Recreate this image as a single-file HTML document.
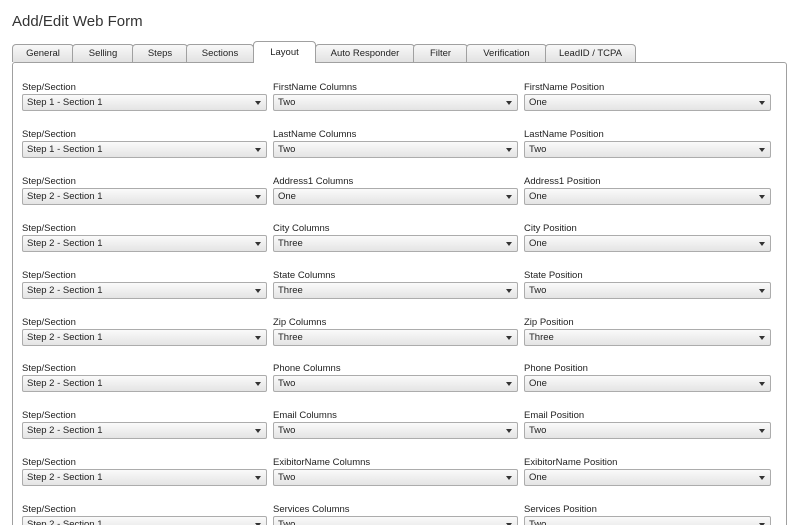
<!DOCTYPE html>
<html><head><style>
html,body{margin:0;width:800px;height:525px;overflow:hidden}
body{background:#fff;font-family:"Liberation Sans",sans-serif;color:#222;position:relative}
h1{position:absolute;left:12px;top:13px;margin:0;font-weight:normal;font-size:15px;color:#333}
.tab{position:absolute;top:44px;height:18px;border:1px solid #a0a0a0;border-bottom:none;border-radius:4px 4px 0 0;background:linear-gradient(#f8f8f8,#e2e2e2);font-size:9.5px;line-height:18px;text-align:center;box-sizing:border-box}
.tab.act{top:41px;height:22px;background:#fff;z-index:2;line-height:22px}
.panel{position:absolute;left:12px;top:62px;width:775px;height:520px;border:1px solid #a0a0a0;border-radius:3px;box-sizing:border-box}
.row{position:absolute;left:0;width:800px;height:30px}
.c{position:absolute;width:245px}
.l{font-size:9.5px;height:11px;line-height:11px}
.s{margin-top:1px;height:17px;border:1px solid #acacac;border-radius:2px;background:linear-gradient(#fafafa,#e4e4e4);box-sizing:border-box;font-size:9.5px;line-height:15px;padding-left:4px;position:relative}
.s:after{content:"";position:absolute;right:5px;top:6px;border:3px solid transparent;border-top:4px solid #333}
.c1{left:22px}.c2{left:273px}.c3{left:524px;width:247px}
</style></head><body>
<h1>Add/Edit Web Form</h1>
<div class="tab" style="left:12px;width:62px">General</div>
<div class="tab" style="left:72px;width:62px">Selling</div>
<div class="tab" style="left:132px;width:56px">Steps</div>
<div class="tab" style="left:186px;width:68px">Sections</div>
<div class="tab act" style="left:253px;width:63px">Layout</div>
<div class="tab" style="left:315px;width:100px">Auto Responder</div>
<div class="tab" style="left:413px;width:55px">Filter</div>
<div class="tab" style="left:466px;width:81px">Verification</div>
<div class="tab" style="left:545px;width:91px">LeadID / TCPA</div>
<div class="panel"></div>

<div class="row" style="top:82px"><div class="c c1"><div class="l">Step/Section</div><div class="s">Step 1 - Section 1</div></div><div class="c c2"><div class="l">FirstName Columns</div><div class="s">Two</div></div><div class="c c3"><div class="l">FirstName Position</div><div class="s">One</div></div></div>
<div class="row" style="top:129px"><div class="c c1"><div class="l">Step/Section</div><div class="s">Step 1 - Section 1</div></div><div class="c c2"><div class="l">LastName Columns</div><div class="s">Two</div></div><div class="c c3"><div class="l">LastName Position</div><div class="s">Two</div></div></div>
<div class="row" style="top:176px"><div class="c c1"><div class="l">Step/Section</div><div class="s">Step 2 - Section 1</div></div><div class="c c2"><div class="l">Address1 Columns</div><div class="s">One</div></div><div class="c c3"><div class="l">Address1 Position</div><div class="s">One</div></div></div>
<div class="row" style="top:223px"><div class="c c1"><div class="l">Step/Section</div><div class="s">Step 2 - Section 1</div></div><div class="c c2"><div class="l">City Columns</div><div class="s">Three</div></div><div class="c c3"><div class="l">City Position</div><div class="s">One</div></div></div>
<div class="row" style="top:270px"><div class="c c1"><div class="l">Step/Section</div><div class="s">Step 2 - Section 1</div></div><div class="c c2"><div class="l">State Columns</div><div class="s">Three</div></div><div class="c c3"><div class="l">State Position</div><div class="s">Two</div></div></div>
<div class="row" style="top:317px"><div class="c c1"><div class="l">Step/Section</div><div class="s">Step 2 - Section 1</div></div><div class="c c2"><div class="l">Zip Columns</div><div class="s">Three</div></div><div class="c c3"><div class="l">Zip Position</div><div class="s">Three</div></div></div>
<div class="row" style="top:363px"><div class="c c1"><div class="l">Step/Section</div><div class="s">Step 2 - Section 1</div></div><div class="c c2"><div class="l">Phone Columns</div><div class="s">Two</div></div><div class="c c3"><div class="l">Phone Position</div><div class="s">One</div></div></div>
<div class="row" style="top:410px"><div class="c c1"><div class="l">Step/Section</div><div class="s">Step 2 - Section 1</div></div><div class="c c2"><div class="l">Email Columns</div><div class="s">Two</div></div><div class="c c3"><div class="l">Email Position</div><div class="s">Two</div></div></div>
<div class="row" style="top:457px"><div class="c c1"><div class="l">Step/Section</div><div class="s">Step 2 - Section 1</div></div><div class="c c2"><div class="l">ExibitorName Columns</div><div class="s">Two</div></div><div class="c c3"><div class="l">ExibitorName Position</div><div class="s">One</div></div></div>
<div class="row" style="top:504px"><div class="c c1"><div class="l">Step/Section</div><div class="s">Step 2 - Section 1</div></div><div class="c c2"><div class="l">Services Columns</div><div class="s">Two</div></div><div class="c c3"><div class="l">Services Position</div><div class="s">Two</div></div></div>
</body></html>
